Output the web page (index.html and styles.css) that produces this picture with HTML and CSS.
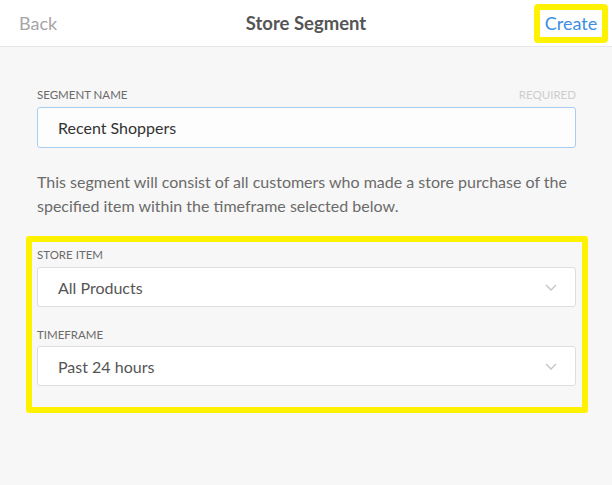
FILE: index.html
```html
<!DOCTYPE html>
<html>
<head>
<meta charset="utf-8">
<link rel="stylesheet" href="styles.css">
</head>
<body>
<header class="topbar">
  <span class="back">Back</span>
  <span class="title">Store Segment</span>
  <span class="create">Create</span>
</header>
<main class="content">
  <div class="label-row">
    <span class="label">SEGMENT NAME</span>
    <span class="required">REQUIRED</span>
  </div>
  <div class="input">Recent Shoppers</div>
  <p class="desc">This segment will consist of all customers who made a store purchase of the specified item within the timeframe selected below.</p>
  <section class="highlight">
    <div class="label-row"><span class="label">STORE ITEM</span></div>
    <div class="select">
      <span>All Products</span>
      <svg class="chev" width="12" height="7" viewBox="0 0 12 7"><path d="M1 1 L6 6 L11 1" fill="none" stroke="#c4c4c4" stroke-width="1.4"/></svg>
    </div>
    <div class="label-row second"><span class="label">TIMEFRAME</span></div>
    <div class="select">
      <span>Past 24 hours</span>
      <svg class="chev" width="12" height="7" viewBox="0 0 12 7"><path d="M1 1 L6 6 L11 1" fill="none" stroke="#c4c4c4" stroke-width="1.4"/></svg>
    </div>
  </section>
</main>
</body>
</html>
```
FILE: styles.css
```css
html, body {
  margin: 0;
  padding: 0;
  background: #f7f7f7;
  font-family: Lato, "Open Sans", sans-serif;
  height: 100%;
}
.topbar {
  height: 46px;
  background: #ffffff;
  border-bottom: 1px solid #e6e6e6;
  display: flex;
  align-items: center;
  justify-content: space-between;
  padding: 0 4px 0 19px;
  position: relative;
}
.back {
  font-size: 18px;
  color: #a6a6a6;
}
.title {
  position: absolute;
  left: 0;
  right: 0;
  text-align: center;
  font-size: 18.5px;
  font-weight: bold;
  color: #555555;
  pointer-events: none;
}
.create {
  font-size: 18px;
  color: #3b8fe0;
  border: 6px solid #fff200;
  border-radius: 4px;
  width: 62px;
  height: 27px;
  display: flex;
  align-items: center;
  justify-content: center;
  box-sizing: content-box;
}
.content {
  padding: 40px 36px 0 37px;
}
.label-row {
  display: flex;
  justify-content: space-between;
  align-items: center;
  height: 14px;
  margin-bottom: 6px;
}
.label {
  font-size: 11.5px;
  color: #6a6a6a;
}
.required {
  font-size: 11.5px;
  color: #cdcdcd;
}
.input {
  height: 39px;
  border: 1px solid #a9cdee;
  border-radius: 3px;
  background: #fdfdfd;
  display: flex;
  align-items: center;
  padding-left: 20px;
  font-size: 16px;
  color: #333333;
}
.desc {
  margin: 22px 0 0 0;
  font-size: 16px;
  line-height: 23.5px;
  color: #6b6b6b;
}
.highlight {
  margin: 19px -12px 0 -11px;
  border: 6px solid #fff200;
  border-radius: 3px;
  padding: 5px 6px 21px 5px;
}
.label-row.second {
  margin-top: 20px;
  margin-bottom: 5px;
}
.select {
  height: 38px;
  border: 1px solid #dedede;
  border-radius: 3px;
  background: #ffffff;
  display: flex;
  align-items: center;
  justify-content: space-between;
  padding: 0 18px 0 20px;
  font-size: 16px;
  color: #555555;
}
.chev {
  display: block;
}
```
